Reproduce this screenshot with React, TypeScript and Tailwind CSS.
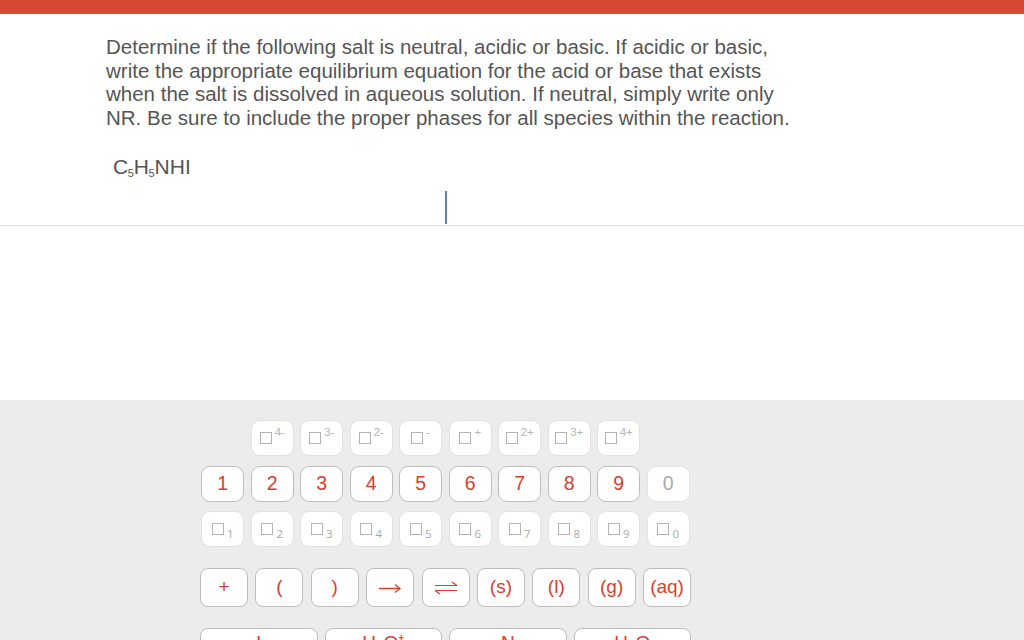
import React from 'react'

const CHARGES = ['4-', '3-', '2-', '-', '+', '2+', '3+', '4+']
const DIGITS = ['1', '2', '3', '4', '5', '6', '7', '8', '9', '0']
const PHASES = ['+', '(', ')', '→', '⇌', '(s)', '(l)', '(g)', '(aq)']

function Box() {
  return <span className="inline-block w-[12px] h-[12px] border-[1.5px] border-[#b3b3b3]" />
}

function RightArrow() {
  return (
    <svg width="24" height="12" viewBox="0 0 24 12" fill="none" stroke="#d9402c" strokeWidth="1.3">
      <path d="M1 6.5h21M17 2.5l5 4-5 4" />
    </svg>
  )
}

function Equilibrium() {
  return (
    <svg width="24" height="14" viewBox="0 0 24 14" fill="none" stroke="#d9402c" strokeWidth="1.2">
      <path d="M1 4.5h22M18 1l5 3.5" />
      <path d="M23 9.5H1M6 13L1 9.5" />
    </svg>
  )
}

function PhaseLabel({ p }: { p: string }) {
  if (p === '→') return <RightArrow />
  if (p === '⇌') return <Equilibrium />
  return <>{p}</>
}

export default function App() {
  return (
    <div className="w-[1024px] h-[640px] overflow-hidden bg-white flex flex-col text-[#555]" style={{ fontFamily: '"Liberation Sans", Arial, sans-serif' }}>
      <div className="h-[14px] bg-[#d64a33] shrink-0" />

      <div className="h-[386px] shrink-0 flex flex-col">
        {/* Question */}
        <div className="pl-[106px] pt-[21px] text-[20.5px] leading-[23.5px]">
          <p>
            <span className="block">Determine if the following salt is neutral, acidic or basic. If acidic or basic,</span>
            <span className="block">write the appropriate equilibrium equation for the acid or base that exists</span>
            <span className="block">when the salt is dissolved in aqueous solution. If neutral, simply write only</span>
            <span className="block">NR. Be sure to include the proper phases for all species within the reaction.</span>
          </p>
          <div className="mt-[26px] ml-[7px] text-[21px] leading-[24px]">
            C<sub className="text-[11px] -ml-[0.5px] relative top-[3px]">5</sub>H<sub className="text-[11px] -ml-[0.5px] relative top-[3px]">5</sub>NHI
          </div>
        </div>

        {/* Answer line */}
        <div className="h-[47px] border-b border-[#dedede] shrink-0 relative">
          <div className="absolute left-[445px] bottom-[1px] w-[1.5px] h-[33px] bg-[#5b7fc0]" />
        </div>
      </div>

      {/* Keypad */}
      <div className="flex-1 bg-[#ececec] pt-[20px]">
        <div className="ml-[200px] w-[491px] flex flex-col items-center">
          <div className="flex gap-[6.5px]">
            {CHARGES.map(c => (
              <div key={c} className="w-[43px] h-[36px] bg-white rounded-[9px] border border-[#e2e2e2] flex items-center justify-center">
                <Box />
                <span className="ml-[3px] -mt-[10px] text-[11.5px] text-[#b5b5b5]">{c}</span>
              </div>
            ))}
          </div>

          <div className="mt-[10px] flex gap-[6.5px]">
            {DIGITS.map(d => (
              <div
                key={d}
                className={d === '0'
                  ? 'w-[43px] h-[36px] bg-white rounded-[9px] border border-[#e4e4e4] flex items-center justify-center text-[19.5px] text-[#aaa]'
                  : 'w-[43px] h-[36px] bg-white rounded-[9px] border border-[#bdbdbd] flex items-center justify-center text-[19.5px] text-[#d9402c]'}
              >
                {d}
              </div>
            ))}
          </div>

          <div className="mt-[9px] flex gap-[6.5px]">
            {DIGITS.map(d => (
              <div key={d} className="w-[43px] h-[36px] bg-white rounded-[9px] border border-[#e2e2e2] flex items-center justify-center">
                <Box />
                <span className="ml-[3px] mt-[10px] text-[11.5px] text-[#aaa]" style={{ fontFamily: '"Open Sans", sans-serif' }}>{d}</span>
              </div>
            ))}
          </div>

          <div className="mt-[21px] flex gap-[7.4px]">
            {PHASES.map(p => (
              <div key={p} className="w-[48px] h-[39px] bg-white rounded-[8px] border border-[#bdbdbd] flex items-center justify-center text-[19px] text-[#d9402c]">
                <PhaseLabel p={p} />
              </div>
            ))}
          </div>

          <div className="mt-[21px] flex gap-[7px]">
            {['I', 'H₃O⁺', 'N', 'H₂O'].map(s => (
              <div key={s} className="w-[117.5px] h-[39px] bg-white rounded-[8px] border border-[#bdbdbd] flex justify-center pt-[3px] text-[19px] leading-[22px] text-[#d9402c]">
                {s}
              </div>
            ))}
          </div>
        </div>
      </div>
    </div>
  )
}
